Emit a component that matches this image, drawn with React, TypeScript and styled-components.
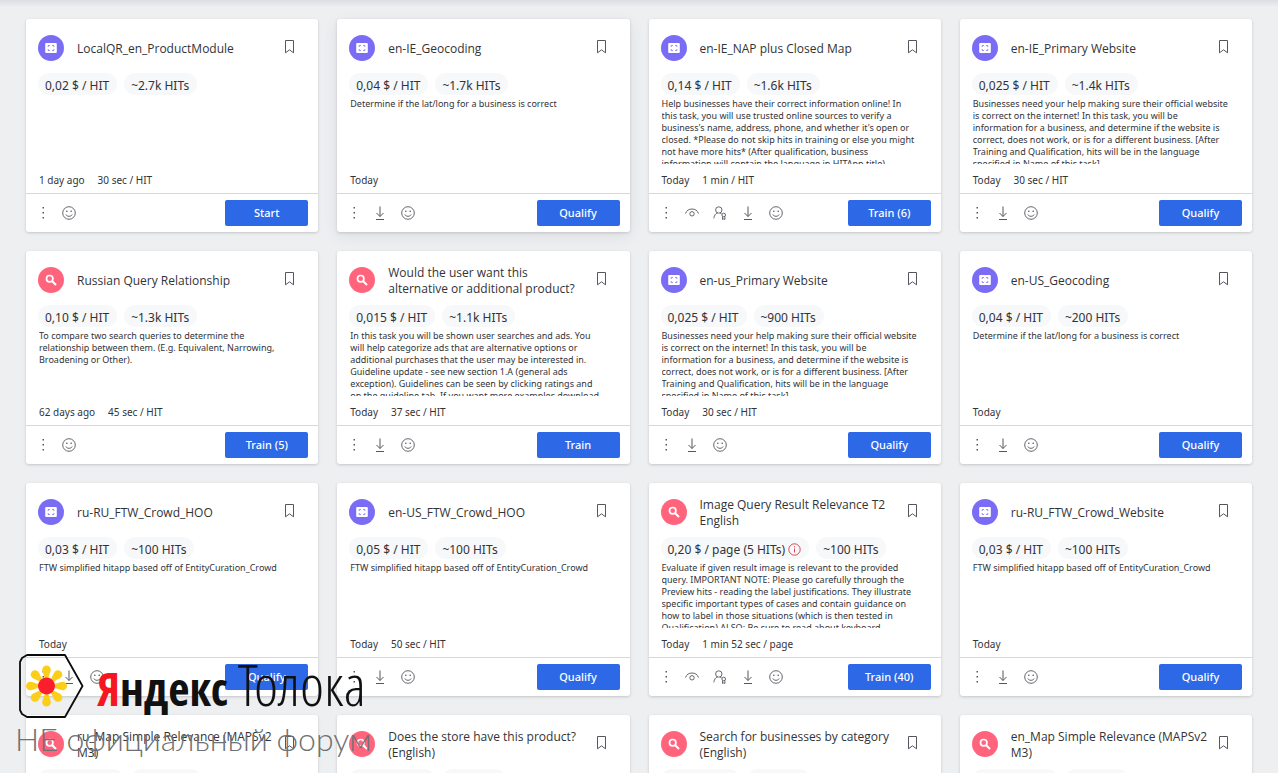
import React from 'react';
import styled, { createGlobalStyle, css } from 'styled-components';

const GlobalStyle = createGlobalStyle`
  * { box-sizing: border-box; }
  body {
    margin: 0;
    background: #eeeff1;
    color: #323338;
    font-family: 'Noto Sans', 'Open Sans', sans-serif;
  }
`;

const Page = styled.div`
  position: relative;
  height: 100vh;
  overflow: hidden;
`;

const HeaderShadow = styled.div`
  height: 7px;
  background: linear-gradient(#dcdde2, #eeeff1);
`;

const Grid = styled.main`
  display: grid;
  grid-template-columns: repeat(4, minmax(0, 1fr));
  gap: 19px;
  padding: 12px 26px 20px;
`;

const CardBox = styled.article<{ $raised?: boolean }>`
  display: flex;
  flex-direction: column;
  background: #fff;
  border-radius: 3px;
  box-shadow: 0 1px 3px rgba(40, 44, 60, 0.22);
  ${(p) =>
    p.$raised &&
    css`
      box-shadow: 0 1px 3px rgba(40, 44, 60, 0.18), 0 4px 16px rgba(40, 44, 60, 0.08);
    `}
`;

const Body = styled.div`
  display: flex;
  flex-direction: column;
  padding: 13px 12px 0;
`;

const Head = styled.header`
  display: flex;
  align-items: center;
  height: 34px;
`;

const Badge = styled.span<{ $pink: boolean }>`
  display: flex;
  align-items: center;
  justify-content: center;
  flex: none;
  width: 26px;
  height: 26px;
  margin-bottom: 2px;
  border-radius: 50%;
  background: ${(p) => (p.$pink ? '#ff647c' : '#7b6cf6')};
`;

const Title = styled.h2`
  flex: 1;
  margin: 0 8px 0 13px;
  font-family: 'Open Sans', 'Noto Sans', sans-serif;
  font-size: 12px;
  font-weight: 500;
  line-height: 16px;
`;

const IconButton = styled.button`
  display: flex;
  padding: 0;
  border: 0;
  background: none;
  color: #55565f;
`;

const SaveButton = styled(IconButton)`
  margin: 0 11px 4px 0;
`;

const Chips = styled.div`
  display: flex;
  gap: 7px;
  margin-top: 7px;
`;

const Chip = styled.span`
  display: flex;
  align-items: center;
  gap: 3px;
  height: 22px;
  padding: 3px 8px 0 7px;
  border-radius: 11px;
  background: #f7f8fa;
  font-size: 12px;
  line-height: 19px;
  white-space: nowrap;
`;

const Description = styled.p`
  height: 66px;
  margin: 3px 12px 0 1px;
  overflow: hidden;
  font-size: 9px;
  line-height: 12px;
`;

const Meta = styled.div`
  display: flex;
  gap: 13px;
  margin: 10px 0 7px 1px;
  font-size: 10px;
  line-height: 12px;
`;

const Foot = styled.footer`
  display: flex;
  align-items: center;
  gap: 14px;
  height: 39px;
  padding: 0 10px 0 12px;
  border-top: 1px solid #d5d8e1;
`;

const Action = styled.button`
  width: 83px;
  height: 26px;
  margin-left: auto;
  padding: 0;
  border: 0;
  border-radius: 2px;
  background: #2d69e6;
  color: #fff;
  font: 500 11px/26px 'Noto Sans', 'Open Sans', sans-serif;
`;

const Watermark = styled.div`
  position: absolute;
  left: 15px;
  top: 653px;
  pointer-events: none;
`;

const Brand = styled.div`
  display: flex;
  align-items: center;
  gap: 12px;
  height: 66px;
  padding-left: 2px;
  color: #111;
  white-space: nowrap;
`;

const BrandName = styled.span`
  display: flex;
  align-items: baseline;
  gap: 10px;
`;

const BrandStrong = styled.strong`
  font: 700 46px/66px 'Open Sans Condensed', 'Roboto Condensed', Roboto, sans-serif;
`;

const BrandInitial = styled.span`
  color: #f5161f;
`;

const BrandLight = styled.span`
  font: 300 58px/66px 'Open Sans Condensed Light', 'Roboto Condensed', 'Open Sans', sans-serif;
`;

const Tagline = styled.div`
  color: #707174;
  font: 300 32px/40px Lato, 'Open Sans', sans-serif;
  white-space: nowrap;
`;

const FrameIcon = () => (
  <svg width="12" height="12" viewBox="0 0 12 12" aria-hidden="true">
    <rect x="0.200" y="1" width="11.600" height="10" rx="1" fill="#fff" />
    <path
      d="M3.200 5V3.500h1.700M7.100 3.500h1.700V5M8.800 7v1.500H7.100M4.900 8.500H3.200V7"
      fill="none"
      stroke="#7b6cf6"
      strokeWidth="0.800"
    />
  </svg>
);

const LensIcon = () => (
  <svg width="12" height="12" viewBox="0 0 12 12" aria-hidden="true">
    <circle cx="4.700" cy="4.700" r="3.200" fill="none" stroke="#fff" strokeWidth="1.700" />
    <path d="M7.200 7.200 11 11" stroke="#fff" strokeWidth="2" />
  </svg>
);

const BookmarkIcon = () => (
  <svg width="11" height="14" viewBox="0 0 11 14" fill="none" stroke="currentColor" aria-hidden="true">
    <path d="M1.500 0.500h8v12.300L5.500 9.800l-4 3z" />
  </svg>
);

const DotsIcon = () => (
  <svg width="10" height="14" viewBox="0 0 10 14" fill="currentColor" aria-hidden="true">
    <rect x="4.500" y="1" width="1.500" height="1.500" />
    <rect x="4.500" y="6" width="1.500" height="1.500" />
    <rect x="4.500" y="11" width="1.500" height="1.500" />
  </svg>
);

const EyeIcon = () => (
  <svg width="14" height="14" viewBox="0 0 14 14" fill="none" stroke="currentColor" strokeWidth="0.900" aria-hidden="true">
    <path d="M0.500 7.500C1.500 4.600 4 3 7 3s5.500 1.600 6.500 4.500" />
    <circle cx="7" cy="7.800" r="2.200" />
  </svg>
);

const PersonIcon = () => (
  <svg width="14" height="14" viewBox="0 0 14 14" fill="none" stroke="currentColor" strokeWidth="0.900" aria-hidden="true">
    <circle cx="5.800" cy="4" r="3.200" />
    <path d="M0.800 12.300C1.200 9.400 2.600 7.600 4.600 6.900M7 6.900l1.600 1" />
    <circle cx="10.700" cy="9" r="1.800" />
    <path d="M9.500 10.500v3l1.200-0.700 1.200 0.700v-3" />
  </svg>
);

const DownloadIcon = () => (
  <svg width="14" height="14" viewBox="0 0 14 14" fill="none" stroke="currentColor" aria-hidden="true">
    <path d="M7 0.500v10M3.500 7 7 10.500 10.500 7M3 13.500h8" />
  </svg>
);

const SmileIcon = () => (
  <svg width="14" height="14" viewBox="0 0 14 14" fill="none" stroke="currentColor" strokeWidth="0.900" aria-hidden="true">
    <circle cx="7" cy="7" r="6.300" />
    <path d="M3.800 8.500c1.200 2.400 5.200 2.400 6.400 0" />
    <circle cx="4.800" cy="5.200" r="0.800" fill="currentColor" stroke="none" />
    <circle cx="9.200" cy="5.200" r="0.800" fill="currentColor" stroke="none" />
  </svg>
);

const InfoIcon = () => (
  <svg width="13" height="13" viewBox="0 0 13 13" fill="none" stroke="#e0454f" aria-hidden="true">
    <circle cx="6.500" cy="6.500" r="5.700" />
    <path d="M6.500 5.500v4M6.500 3.200v1.200" />
  </svg>
);

const Logo = () => (
  <svg width="68" height="66" viewBox="17 653 68 66" aria-hidden="true">
    <path
      d="M27 655H65L82.500 686 65 717H27L22 714 20 710V662L22 658Z"
      fill="none"
      stroke="#0c0c0c"
      strokeWidth="1.800"
      strokeLinejoin="round"
    />
    <g fill="#fdce19">
      {[0, 45, 90, 135, 180, 225, 270, 315].map((angle) => (
        <g key={angle} transform={`rotate(${angle} 46.500 686)`}>
          <circle cx="46.500" cy="669.800" r="4.300" />
          <path d="M42.600 671.500 45 679H48L50.400 671.500Z" />
        </g>
      ))}
    </g>
    <circle cx="46.500" cy="686" r="8.500" fill="#fb1f2c" />
  </svg>
);

type Tool = 'preview' | 'worker' | 'download';

const toolIcons: Record<Tool, { label: string; icon: React.ReactNode }> = {
  preview: { label: 'Preview', icon: <EyeIcon /> },
  worker: { label: 'Qualification', icon: <PersonIcon /> },
  download: { label: 'Download', icon: <DownloadIcon /> },
};

interface Task {
  title: string;
  search?: boolean;
  price: string;
  info?: boolean;
  hits: string;
  text?: string;
  age: string;
  time?: string;
  tools?: Tool[];
  action: string;
  raised?: boolean;
}

const websiteText =
  'Businesses need your help making sure their official website is correct on the internet! In this task, you will be information for a business, and determine if the website is correct, does not work, or is for a different business. [After Training and Qualification, hits will be in the language specified in Name of this task]';
const geoText = 'Determine if the lat/long for a business is correct';
const ftwText = 'FTW simplified hitapp based off of EntityCuration_Crowd';

const tasks: Task[] = [
  { title: 'LocalQR_en_ProductModule', price: '0,02 $ / HIT', hits: '~2.7k HITs', age: '1 day ago', time: '30 sec / HIT', action: 'Start' },
  { title: 'en-IE_Geocoding', price: '0,04 $ / HIT', hits: '~1.7k HITs', text: geoText, age: 'Today', tools: ['download'], action: 'Qualify', raised: true },
  {
    title: 'en-IE_NAP plus Closed Map',
    price: '0,14 $ / HIT',
    hits: '~1.6k HITs',
    text: "Help businesses have their correct information online! In this task, you will use trusted online sources to verify a business's name, address, phone, and whether it's open or closed. *Please do not skip hits in training or else you might not have more hits* (After qualification, business information will contain the language in HITApp title)",
    age: 'Today',
    time: '1 min / HIT',
    tools: ['preview', 'worker', 'download'],
    action: 'Train (6)',
  },
  { title: 'en-IE_Primary Website', price: '0,025 $ / HIT', hits: '~1.4k HITs', text: websiteText, age: 'Today', time: '30 sec / HIT', tools: ['download'], action: 'Qualify' },
  {
    title: 'Russian Query Relationship',
    search: true,
    price: '0,10 $ / HIT',
    hits: '~1.3k HITs',
    text: 'To compare two search queries to determine the relationship between them. (E.g. Equivalent, Narrowing, Broadening or Other).',
    age: '62 days ago',
    time: '45 sec / HIT',
    action: 'Train (5)',
  },
  {
    title: 'Would the user want this alternative or additional product?',
    search: true,
    price: '0,015 $ / HIT',
    hits: '~1.1k HITs',
    text: 'In this task you will be shown user searches and ads. You will help categorize ads that are alternative options or additional purchases that the user may be interested in. Guideline update - see new section 1.A (general ads exception). Guidelines can be seen by clicking ratings and on the guideline tab. If you want more examples download',
    age: 'Today',
    time: '37 sec / HIT',
    tools: ['download'],
    action: 'Train',
  },
  { title: 'en-us_Primary Website', price: '0,025 $ / HIT', hits: '~900 HITs', text: websiteText, age: 'Today', time: '30 sec / HIT', tools: ['download'], action: 'Qualify' },
  { title: 'en-US_Geocoding', price: '0,04 $ / HIT', hits: '~200 HITs', text: geoText, age: 'Today', tools: ['download'], action: 'Qualify' },
  { title: 'ru-RU_FTW_Crowd_HOO', price: '0,03 $ / HIT', hits: '~100 HITs', text: ftwText, age: 'Today', tools: ['download'], action: 'Qualify' },
  { title: 'en-US_FTW_Crowd_HOO', price: '0,05 $ / HIT', hits: '~100 HITs', text: ftwText, age: 'Today', time: '50 sec / HIT', tools: ['download'], action: 'Qualify' },
  {
    title: 'Image Query Result Relevance T2 English',
    search: true,
    price: '0,20 $ / page (5 HITs)',
    info: true,
    hits: '~100 HITs',
    text: 'Evaluate if given result image is relevant to the provided query. IMPORTANT NOTE: Please go carefully through the Preview hits - reading the label justifications. They illustrate specific important types of cases and contain guidance on how to label in those situations (which is then tested in Qualification) ALSO: Be sure to read about keyboard',
    age: 'Today',
    time: '1 min 52 sec / page',
    tools: ['preview', 'worker', 'download'],
    action: 'Train (40)',
  },
  { title: 'ru-RU_FTW_Crowd_Website', price: '0,03 $ / HIT', hits: '~100 HITs', text: ftwText, age: 'Today', tools: ['download'], action: 'Qualify' },
  { title: 'ru_Map Simple Relevance (MAPSv2 M3)', search: true, price: '0,025 $ / HIT', hits: '~100 HITs', age: 'Today', action: 'Qualify' },
  { title: 'Does the store have this product? (English)', search: true, price: '0,025 $ / HIT', hits: '~80 HITs', age: 'Today', action: 'Qualify' },
  { title: 'Search for businesses by category (English)', search: true, price: '0,03 $ / HIT', hits: '~80 HITs', age: 'Today', action: 'Qualify' },
  { title: 'en_Map Simple Relevance (MAPSv2 M3)', search: true, price: '0,025 $ / HIT', hits: '~70 HITs', age: 'Today', action: 'Qualify' },
];

const TaskCard = ({ task }: { task: Task }) => (
  <CardBox $raised={task.raised}>
    <Body>
      <Head>
        <Badge $pink={!!task.search}>{task.search ? <LensIcon /> : <FrameIcon />}</Badge>
        <Title>{task.title}</Title>
        <SaveButton aria-label="Save task">
          <BookmarkIcon />
        </SaveButton>
      </Head>
      <Chips>
        <Chip>
          {task.price}
          {task.info && <InfoIcon />}
        </Chip>
        <Chip>{task.hits}</Chip>
      </Chips>
      <Description>{task.text}</Description>
      <Meta>
        <span>{task.age}</span>
        {task.time && <span>{task.time}</span>}
      </Meta>
    </Body>
    <Foot>
      <IconButton aria-label="More">
        <DotsIcon />
      </IconButton>
      {task.tools?.map((tool) => (
        <IconButton key={tool} aria-label={toolIcons[tool].label}>
          {toolIcons[tool].icon}
        </IconButton>
      ))}
      <IconButton aria-label="Feedback">
        <SmileIcon />
      </IconButton>
      <Action>{task.action}</Action>
    </Foot>
  </CardBox>
);

export default function App() {
  return (
    <>
      <GlobalStyle />
      <Page>
        <HeaderShadow />
        <Grid>
          {tasks.map((task) => (
            <TaskCard key={task.title} task={task} />
          ))}
        </Grid>
        <Watermark>
          <Brand>
            <Logo />
            <BrandName>
              <BrandStrong>
                <BrandInitial>Я</BrandInitial>ндекс
              </BrandStrong>
              <BrandLight>Толока</BrandLight>
            </BrandName>
          </Brand>
          <Tagline>НЕ официальный форум</Tagline>
        </Watermark>
      </Page>
    </>
  );
}
